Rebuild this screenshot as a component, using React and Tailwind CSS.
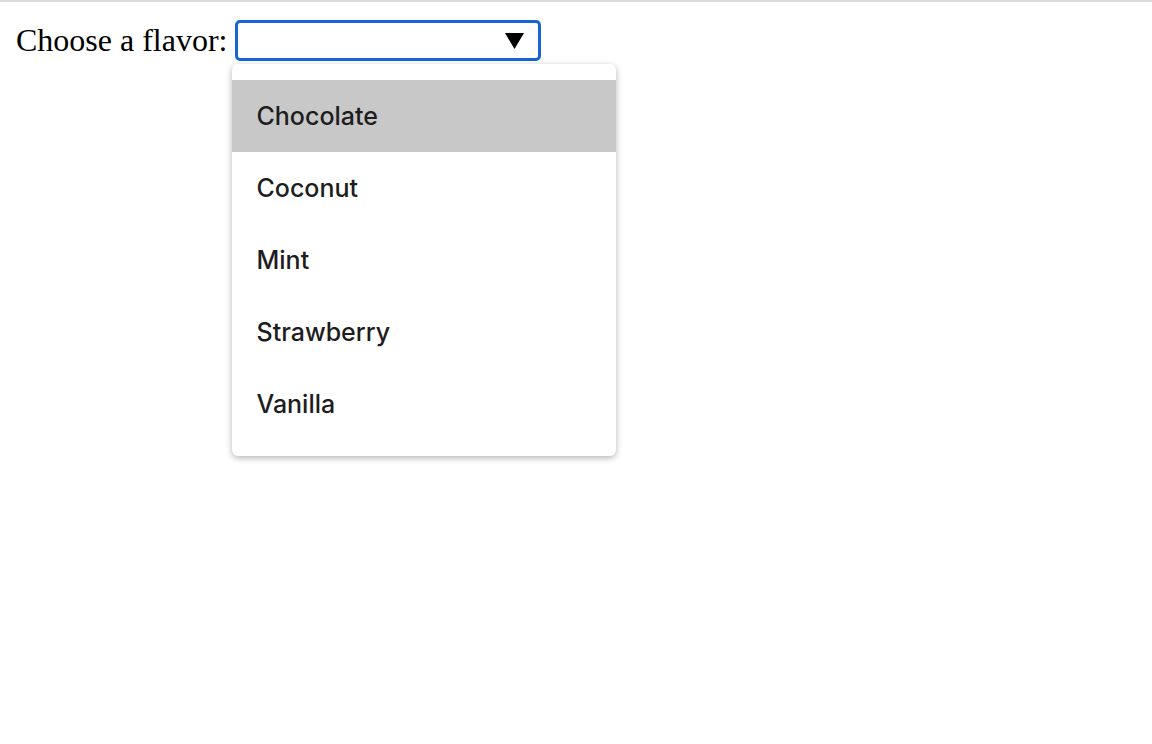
import { useState } from 'react';

const FLAVORS = ['Chocolate', 'Coconut', 'Mint', 'Strawberry', 'Vanilla'];

export default function App() {
  const [active, setActive] = useState(0);

  return (
    <div className="h-[744px] w-[1152px] overflow-hidden bg-white">
      <div className="h-[3px] border-t-2 border-[#dcdcdc]" />
      <div className="flex items-start gap-[7px] pl-4 pt-[17px]">
        <label
          htmlFor="flavor"
          className="pt-[1px] font-['Liberation_Serif',serif] text-[32px] leading-[38px] text-black"
        >
          Choose a flavor:
        </label>
        <div className="relative">
          <button
            id="flavor"
            className="flex h-[41px] w-[306px] items-center justify-end rounded-[5px] border-[3px] border-[#1766d0] bg-white pr-[14px]"
          >
            <svg width="19" height="16" viewBox="0 0 19 16">
              <path d="M0 0H19L9.5 16Z" fill="#000" />
            </svg>
          </button>
          <ul className="absolute left-[-3px] top-[44px] w-[384px] rounded-[6px] bg-white py-4 shadow-[0_2px_6px_rgba(0,0,0,0.3)]">
            {FLAVORS.map((name, i) => (
              <li
                key={name}
                onMouseEnter={() => setActive(i)}
                className={`flex h-[72px] items-center pl-[25px] pt-[2px] font-['Inter',sans-serif] text-[25px] font-medium text-[#1d1d21] ${
                  i === active ? 'bg-[#c8c8c8]' : ''
                }`}
              >
                {name}
              </li>
            ))}
          </ul>
        </div>
      </div>
    </div>
  );
}
